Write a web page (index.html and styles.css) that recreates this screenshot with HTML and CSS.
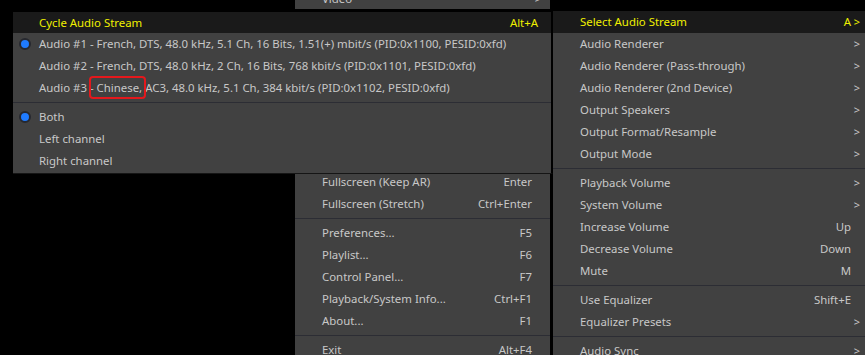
FILE: index.html
```html
<!DOCTYPE html>
<html lang="en">
  <head>
    <meta charset="UTF-8" />
    <meta name="viewport" content="width=device-width, initial-scale=1.0" />
    <title>Audio menu</title>
    <link rel="stylesheet" href="styles.css">
  </head>

  <body>
    <div class="desk">
      <!--main context menu, mostly under the submenus-->
      <div class="menu menu-main">
        <div class="item"><span></span><span class="label">Video</span><span class="key"></span><span class="arrow">&gt;</span></div>
        <!--rows covered by the stream submenu-->
        <div class="covered"></div>
        <div class="item"><span></span><span class="label">Fullscreen (Keep AR)</span><span class="key">Enter</span><span class="arrow"></span></div>
        <div class="item"><span></span><span class="label">Fullscreen (Stretch)</span><span class="key">Ctrl+Enter</span><span class="arrow"></span></div>
        <div class="sep"></div>
        <div class="item"><span></span><span class="label">Preferences...</span><span class="key">F5</span><span class="arrow"></span></div>
        <div class="item"><span></span><span class="label">Playlist...</span><span class="key">F6</span><span class="arrow"></span></div>
        <div class="item"><span></span><span class="label">Control Panel...</span><span class="key">F7</span><span class="arrow"></span></div>
        <div class="item"><span></span><span class="label">Playback/System Info...</span><span class="key">Ctrl+F1</span><span class="arrow"></span></div>
        <div class="item"><span></span><span class="label">About...</span><span class="key">F1</span><span class="arrow"></span></div>
        <div class="sep"></div>
        <div class="item"><span></span><span class="label">Exit</span><span class="key">Alt+F4</span><span class="arrow"></span></div>
      </div>

      <!--Audio submenu-->
      <div class="menu menu-audio">
        <div class="item active"><span></span><span class="label">Select Audio Stream</span><span class="key">A</span><span class="arrow">&gt;</span></div>
        <div class="item"><span></span><span class="label">Audio Renderer</span><span class="key"></span><span class="arrow">&gt;</span></div>
        <div class="item"><span></span><span class="label">Audio Renderer (Pass-through)</span><span class="key"></span><span class="arrow">&gt;</span></div>
        <div class="item"><span></span><span class="label">Audio Renderer (2nd Device)</span><span class="key"></span><span class="arrow">&gt;</span></div>
        <div class="item"><span></span><span class="label">Output Speakers</span><span class="key"></span><span class="arrow">&gt;</span></div>
        <div class="item"><span></span><span class="label">Output Format/Resample</span><span class="key"></span><span class="arrow">&gt;</span></div>
        <div class="item"><span></span><span class="label">Output Mode</span><span class="key"></span><span class="arrow">&gt;</span></div>
        <div class="sep"></div>
        <div class="item"><span></span><span class="label">Playback Volume</span><span class="key"></span><span class="arrow">&gt;</span></div>
        <div class="item"><span></span><span class="label">System Volume</span><span class="key"></span><span class="arrow">&gt;</span></div>
        <div class="item"><span></span><span class="label">Increase Volume</span><span class="key">Up</span><span class="arrow"></span></div>
        <div class="item"><span></span><span class="label">Decrease Volume</span><span class="key">Down</span><span class="arrow"></span></div>
        <div class="item"><span></span><span class="label">Mute</span><span class="key">M</span><span class="arrow"></span></div>
        <div class="sep"></div>
        <div class="item"><span></span><span class="label">Use Equalizer</span><span class="key">Shift+E</span><span class="arrow"></span></div>
        <div class="item"><span></span><span class="label">Equalizer Presets</span><span class="key"></span><span class="arrow">&gt;</span></div>
        <div class="sep"></div>
        <div class="item"><span></span><span class="label">Audio Sync</span><span class="key"></span><span class="arrow">&gt;</span></div>
      </div>

      <!--Select Audio Stream submenu, opened to the left-->
      <div class="menu menu-stream">
        <div class="item active head"><span></span><span class="label">Cycle Audio Stream</span><span class="key">Alt+A</span><span class="arrow"></span></div>
        <div class="item"><span class="radio"></span><span class="label">Audio #1 - French, DTS, 48.0 kHz, 5.1 Ch, 16 Bits, 1.51(+) mbit/s (PID:0x1100, PESID:0xfd)</span><span class="key"></span><span class="arrow"></span></div>
        <div class="item"><span></span><span class="label">Audio #2 - French, DTS, 48.0 kHz, 2 Ch, 16 Bits, 768 kbit/s (PID:0x1101, PESID:0xfd)</span><span class="key"></span><span class="arrow"></span></div>
        <div class="item"><span></span><span class="label">Audio #3 - <span class="mark">Chinese,</span> AC3, 48.0 kHz, 5.1 Ch, 384 kbit/s (PID:0x1102, PESID:0xfd)</span><span class="key"></span><span class="arrow"></span></div>
        <div class="sep"></div>
        <div class="item"><span class="radio"></span><span class="label">Both</span><span class="key"></span><span class="arrow"></span></div>
        <div class="item"><span></span><span class="label">Left channel</span><span class="key"></span><span class="arrow"></span></div>
        <div class="item"><span></span><span class="label">Right channel</span><span class="key"></span><span class="arrow"></span></div>
      </div>
    </div>
  </body>
</html>
```

FILE: styles.css
```css
html,
body {
  margin: 0;
  padding: 0;
  background: #000;
  overflow: hidden;
}

body {
  width: 865px;
  height: 355px;
  font-family: 'Noto Sans', 'Open Sans', sans-serif;
  font-size: 11.4px;
  color: #c8c8c8;
}

.desk {
  position: relative;
  width: 865px;
  height: 355px;
  overflow: hidden;
}

/* the three menus lie over each other like windows */
.menu {
  position: absolute;
  background: #414141;
  display: flex;
  flex-direction: column;
}

.menu-main {
  left: 295px;
  top: -12px;
  width: 255px;
  z-index: 1;
}

.menu-audio {
  left: 550px;
  top: 11px;
  width: 316px;
  border-left: 3px solid #000;
  z-index: 2;
}

.menu-stream {
  left: 13px;
  top: 9px;
  width: 538px;
  border-top: 3px solid #000;
  border-right: 2px solid #000;
  border-bottom: 1px solid #151515;
  padding-bottom: 1px;
  z-index: 3;
}

.covered {
  height: 161px;
}

.item {
  box-sizing: border-box;
  display: grid;
  grid-template-columns: 26px 1fr auto 8px;
  column-gap: 1px;
  align-items: center;
  height: 22px;
  padding-right: 9px;
  padding-bottom: 1px;
  white-space: nowrap;
}

.menu-stream .item {
  grid-template-columns: 25px 1fr auto 8px;
  padding-right: 4px;
}

.item.head {
  height: 21px;
}

.item.active {
  background: #1a1a1a;
  color: #f0f000;
}

.key {
  text-align: right;
}

.arrow {
  text-align: right;
  font-size: 11px;
}

.sep {
  height: 7px;
  display: flex;
  align-items: center;
}

.sep::before {
  content: '';
  flex: 1;
  height: 1px;
  background: #2c2d34;
}

.radio {
  justify-self: center;
  margin-left: -1px;
  width: 8px;
  height: 8px;
  border-radius: 50%;
  background: #1f7bff;
  border: 2px solid #26282f;
}

.mark {
  position: relative;
}

.mark::after {
  content: '';
  position: absolute;
  left: -8px;
  right: -4px;
  top: -4px;
  bottom: -4px;
  border: 2px solid #e4181c;
  border-radius: 4px;
}
```
